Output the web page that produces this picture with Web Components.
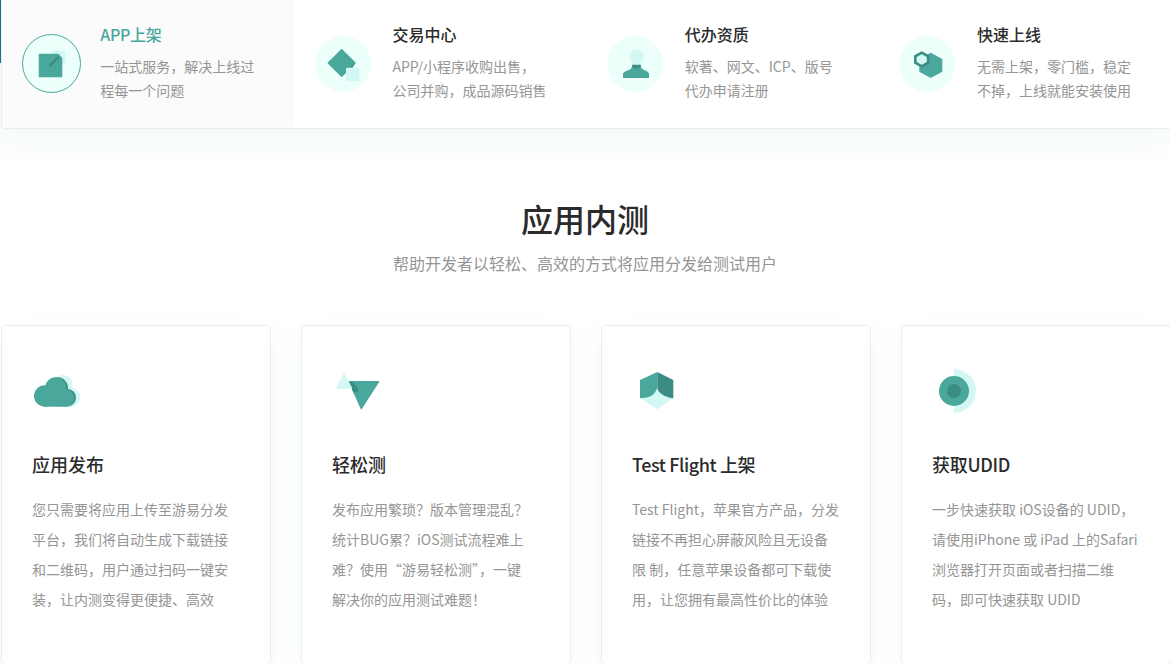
<!DOCTYPE html>
<html lang="zh-CN">
<head>
<meta charset="utf-8">
<title>应用内测</title>
<style>
	html, body {
		margin: 0;
		height: 664px;
		overflow: hidden;
		background: #fff;
		font-family: "Noto Sans CJK SC", "Noto Sans", sans-serif;
		color: #2b2b2b;
	}
</style>
</head>
<body>
<template id="nav-item-template">
	<style>
		:host {
			display: flex;
			align-items: center;
			box-sizing: border-box;
			height: 127px;
			padding-left: 20.25px;
		}
		:host([active]) {
			background: #fbfbfb;
			border-radius: 4px 0 0 4px;
		}
		.icon {
			flex: none;
			display: flex;
			width: 56px;
			height: 56px;
			margin-right: 22px;
			border-radius: 50%;
			background: #ecfffb;
		}
		:host([active]) .icon {
			box-sizing: border-box;
			width: 59px;
			height: 59px;
			margin-right: 19px;
			border: 1px solid #49a79b;
		}
		.text {
			padding-bottom: 4px;
		}
		.title {
			font-size: 16px;
			font-weight: 500;
			line-height: 24px;
			margin-bottom: 8px;
			letter-spacing: var(--title-tracking, 0);
		}
		:host([active]) .title {
			color: #49a79b;
		}
		.desc {
			font-size: 14px;
			line-height: 24px;
			color: #959595;
			white-space: nowrap;
		}
	</style>
	<div class="icon"><slot name="icon"></slot></div>
	<div class="text">
		<div class="title"></div>
		<div class="desc"><slot></slot></div>
	</div>
</template>

<template id="feature-card-template">
	<style>
		:host {
			display: block;
			box-sizing: border-box;
			width: 270px;
			height: 340px;
			padding: 36px 30px 0;
			background: #fff;
			border: 1px solid #e9eeee;
			border-radius: 5px;
			box-shadow: 0 8px 24px rgba(90, 160, 160, 0.07);
		}
		.icon {
			height: 60px;
			margin-bottom: 28px;
		}
		.title {
			font-size: 18px;
			font-weight: 500;
			line-height: 28px;
			margin-bottom: 16px;
			letter-spacing: var(--title-tracking, 0);
		}
		.desc {
			font-size: 14px;
			line-height: 30px;
			color: #959595;
			white-space: nowrap;
		}
	</style>
	<div class="icon"><slot name="icon"></slot></div>
	<div class="title"></div>
	<div class="desc"><slot></slot></div>
</template>

<template id="nav-bar-template">
	<style>
		:host {
			position: relative;
			display: grid;
			grid-template-columns: repeat(4, 292.25px);
			box-sizing: border-box;
			width: 1171px;
			height: 129px;
			margin-left: 1px;
			background: #fff;
			border: 1px solid #e9eeee;
			border-top: 0;
			border-right: 0;
			border-radius: 0 0 4px 4px;
			box-shadow: 0 12px 30px rgba(90, 170, 170, 0.08);
		}
		.edge {
			position: absolute;
			left: -2px;
			top: 0;
			width: 1px;
			height: 63px;
			background: #1a6f8e;
		}
	</style>
	<div class="edge"></div>
	<slot></slot>
</template>

<template id="section-head-template">
	<style>
		:host {
			display: block;
			padding-top: 64px;
			text-align: center;
		}
		h2 {
			margin: 0;
			font-size: 32px;
			font-weight: 500;
			line-height: 50px;
		}
		p {
			margin: 8px 0 0;
			font-size: 16px;
			line-height: 24px;
			color: #959595;
		}
	</style>
	<h2></h2>
	<p><slot></slot></p>
</template>

<template id="card-row-template">
	<style>
		:host {
			display: flex;
			gap: 30px;
			width: 1171px;
			margin: 50px 0 0 1px;
		}
	</style>
	<slot></slot>
</template>

<nav-bar>
	<nav-item active heading="APP上架" style="--title-tracking:-0.3px">
		<svg slot="icon" width="57" height="57" viewBox="1 1 58 58" style="display:block">
			<rect x="30" y="17" width="14" height="13" fill="#d3f8f4"/>
			<path d="M17 21a1 1 0 0 1 1-1h19l4 4.300v18.700a1 1 0 0 1-1 1H18a1 1 0 0 1-1-1z" fill="#49a79b"/>
			<path d="M28 32.700L37.300 23.300" stroke="#3b8c82" stroke-width="2.500" fill="none"/>
		</svg>
		一站式服务，解决上线过<br>程每一个问题
	</nav-item>
	<nav-item heading="交易中心">
		<svg slot="icon" width="56" height="56" viewBox="0 0 56 56" style="display:block">
			<path d="M26.700 13.700L40 27L26.700 40.300L13.300 27z" fill="#49a79b" stroke="#49a79b" stroke-width="1.500" stroke-linejoin="round"/>
			<path d="M26.700 40.300L31 36V31.700h6.500L39 29L40 27L26.700 40.300z" fill="#3b8c82"/>
			<rect x="31" y="31.700" width="13.300" height="13.300" rx="1" fill="#d3f8f4"/>
		</svg>
		APP/小程序收购出售，<br>公司并购，成品源码销售
	</nav-item>
	<nav-item heading="代办资质">
		<svg slot="icon" width="56" height="56" viewBox="0 0 56 56" style="display:block">
			<path d="M16 42V37.500C16 36 21 34.500 23 33.500C25 32.500 25 30 25.300 28.700H33.500C34 30 34 32.500 36 33.500C38 34.500 42 36 42 37.500V42z" fill="#49a79b"/>
			<path d="M25.300 28.700H33.700C34 31 33 32.300 30 32.300H28.500C26 32.300 25.200 31 25.300 28.700z" fill="#3b8c82"/>
			<circle cx="29.700" cy="21" r="7.500" fill="#d3f8f4"/>
		</svg>
		软著、网文、ICP、版号<br>代办申请注册
	</nav-item>
	<nav-item heading="快速上线">
		<svg slot="icon" width="56" height="56" viewBox="0 0 56 56" style="display:block">
			<path d="M31.700 16.700L43.300 23V35.700L31.700 42L20.300 35.700V23z" fill="#49a79b"/>
			<path d="M22.700 16.700L29.100 20.300V26.700L22.700 30.300L16.300 26.700V20.300z" fill="#d3f8f4" stroke="#3b8c82" stroke-width="2.600"/>
		</svg>
		无需上架，零门槛，稳定<br>不掉，上线就能安装使用
	</nav-item>
</nav-bar>

<section-head heading="应用内测">帮助开发者以轻松、高效的方式将应用分发给测试用户</section-head>

<card-row>
	<feature-card heading="应用发布">
		<svg slot="icon" width="60" height="60" viewBox="0 0 60 60" style="display:block;margin-left:-1px">
			<g fill="#d3f8f4">
				<circle cx="32.300" cy="22.300" r="9.300"/>
				<circle cx="40" cy="35.300" r="9.400"/>
				<rect x="28" y="28" width="12" height="16.700"/>
				<rect x="34" y="26" width="6" height="6"/>
			</g>
			<g fill="#3b8c82" transform="translate(1.700 0)">
				<circle cx="24.700" cy="26" r="10.700"/>
				<circle cx="34.700" cy="35.700" r="8.600"/>
			</g>
			<g fill="#49a79b">
				<circle cx="13.700" cy="34" r="10.700"/>
				<circle cx="24.700" cy="26" r="10.700"/>
				<circle cx="34.700" cy="36.100" r="8.600"/>
				<rect x="13.700" y="28" width="21" height="16.700"/>
			</g>
		</svg>
		您只需要将应用上传至游易分发<br>平台，我们将自动生成下载链接<br>和二维码，用户通过扫码一键安<br>装，让内测变得更便捷、高效
	</feature-card>
	<feature-card heading="轻松测">
		<svg slot="icon" width="60" height="60" viewBox="0 0 60 60" style="display:block;margin-left:-1px">
			<path d="M18 19.500H47.800L30.300 46.800z" fill="#49a79b" stroke="#49a79b" stroke-width="1.200" stroke-linejoin="round"/>
			<path d="M19.700 19L22.300 20.700L27 26V30.300H22.300L18.300 21.300z" fill="#3b8c82"/>
			<path d="M13 11.800L20.800 26.200H5.500z" fill="#d3f8f4" stroke="#d3f8f4" stroke-width="1" stroke-linejoin="round"/>
		</svg>
		发布应用繁琐？版本管理混乱？<br>统计BUG累？iOS测试流程难上<br>难？使用“游易轻松测”，一键<br>解决你的应用测试难题！
	</feature-card>
	<feature-card heading="Test Flight 上架" style="--title-tracking:-0.4px">
		<svg slot="icon" width="60" height="60" viewBox="0 0 60 60" style="display:block;margin-left:-1px">
			<path d="M26.300 10L9 18V36.300L26.300 40z" fill="#49a79b"/>
			<path d="M26.300 10L42.300 18V36.300L26.300 40z" fill="#3b8c82"/>
			<path d="M9 36.300C19 36 24 33 26 26C27.500 31 33 35 42.300 36.300L26.300 47.300z" fill="#d3f8f4"/>
		</svg>
		Test Flight，苹果官方产品，分发<br>链接不再担心屏蔽风险且无设备<br>限 制，任意苹果设备都可下载使<br>用，让您拥有最高性价比的体验
	</feature-card>
	<feature-card heading="获取UDID" style="--title-tracking:-0.3px">
		<svg slot="icon" width="60" height="60" viewBox="0 0 60 60" style="display:block;margin-left:-1px">
			<path d="M23 7a22 22 0 0 1 0 44z" fill="#d3f8f4"/>
			<circle cx="23" cy="29" r="15" fill="#49a79b"/>
			<circle cx="23" cy="29" r="7" fill="#3b8c82"/>
		</svg>
		一步快速获取 iOS设备的 UDID，<br>请使用iPhone 或 iPad 上的Safari<br>浏览器打开页面或者扫描二维<br>码，即可快速获取 UDID
	</feature-card>
</card-row>

<script>
	// Shared base: clones the template and copies the heading attribute into the title element
	class TemplatedElement extends HTMLElement {
		constructor(templateId) {
			super();
			this.attachShadow({mode: 'open'});
			const template = document.getElementById(templateId).content;
			this.shadowRoot.appendChild(template.cloneNode(true));
		}

		connectedCallback() {
			const heading = this.shadowRoot.querySelector('.title, h2');
			if (heading) {
				heading.textContent = this.getAttribute('heading');
			}
		}
	}

	customElements.define('nav-bar', class extends TemplatedElement {
		constructor() { super('nav-bar-template'); }
	});
	customElements.define('nav-item', class extends TemplatedElement {
		constructor() { super('nav-item-template'); }
	});
	customElements.define('section-head', class extends TemplatedElement {
		constructor() { super('section-head-template'); }
	});
	customElements.define('card-row', class extends TemplatedElement {
		constructor() { super('card-row-template'); }
	});
	customElements.define('feature-card', class extends TemplatedElement {
		constructor() { super('feature-card-template'); }
	});
</script>
</body>
</html>
